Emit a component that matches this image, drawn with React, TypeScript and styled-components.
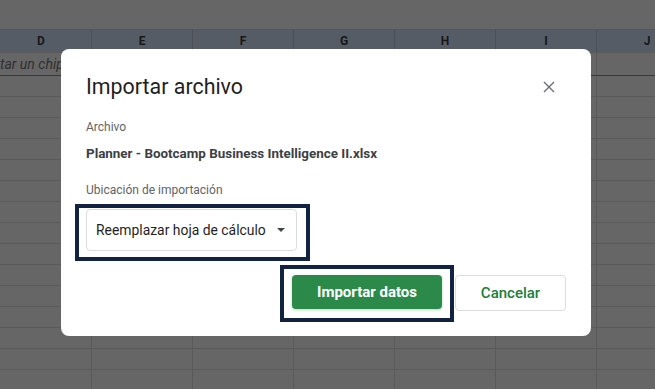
import React from 'react';
import styled, { createGlobalStyle } from 'styled-components';

const columns = ['D', 'E', 'F', 'G', 'H', 'I', 'J'];
const bodyRows = 15;

const GlobalStyle = createGlobalStyle`
  html, body {
    margin: 0;
    padding: 0;
    overflow: hidden;
    background: #666666;
  }
  * {
    box-sizing: border-box;
  }
`;

const Page = styled.div`
  position: relative;
  width: 655px;
  height: 389px;
  overflow: hidden;
  background: #666666;
  font-family: Roboto, 'Liberation Sans', Arial, sans-serif;
`;

const TopStrip = styled.div`
  height: 30px;
  background: #666666;
  border-bottom: 1px solid #575757;
`;

const GridRow = styled.div<{ $header?: boolean; $selected?: boolean; $height: number }>`
  display: grid;
  grid-template-columns: repeat(7, 101px);
  margin-left: -9px;
  height: ${({ $height }) => $height}px;
  background: ${({ $header }) => ($header ? '#565c66' : '#666666')};
  border-bottom: 1px solid ${({ $selected }) => ($selected ? '#1f3b64' : '#5a5a5a')};
`;

const Cell = styled.div<{ $header?: boolean }>`
  display: flex;
  align-items: center;
  justify-content: ${({ $header }) => ($header ? 'center' : 'flex-start')};
  border-right: 1px solid ${({ $header }) => ($header ? '#4b5058' : '#5a5a5a')};
  color: #17181a;
  font-size: 12px;
  font-weight: ${({ $header }) => ($header ? 700 : 400)};
  overflow: visible;
  white-space: nowrap;
`;

const Placeholder = styled.span`
  padding-left: 9px;
  font-size: 14px;
  font-style: italic;
  color: #303030;
`;

const Overlay = styled.div`
  position: absolute;
  inset: 0;
  display: flex;
  align-items: flex-start;
  justify-content: flex-start;
  padding: 49px 0 0 61px;
`;

const Dialog = styled.div`
  width: 530px;
  height: 287px;
  background: #ffffff;
  border-radius: 8px;
  padding: 24px 25px 25px 25px;
  display: flex;
  flex-direction: column;
`;

const TitleRow = styled.div`
  display: flex;
  align-items: center;
  justify-content: space-between;
  height: 28px;
`;

const Title = styled.h2`
  margin: 0;
  font-size: 21.4px;
  font-weight: 400;
  line-height: 28px;
  color: #1f1f1f;
`;

const CloseButton = styled.button`
  width: 24px;
  height: 24px;
  margin-right: 5px;
  padding: 0;
  border: none;
  background: transparent;
  display: flex;
  align-items: center;
  justify-content: center;
  cursor: pointer;
`;

const Label = styled.div<{ $gap: number }>`
  margin-top: ${({ $gap }) => $gap}px;
  font-size: 12px;
  line-height: 16px;
  color: #5f6368;
`;

const FileName = styled.div`
  margin-top: 9px;
  font-size: 13.4px;
  font-weight: 700;
  line-height: 20px;
  color: #3c4043;
`;

const Anchor = styled.div<{ $gap?: number }>`
  position: relative;
  align-self: flex-start;
  margin-top: ${({ $gap }) => $gap ?? 0}px;
`;

const Highlight = styled.div<{ $t: number; $r: number; $b: number; $l: number }>`
  position: absolute;
  top: ${({ $t }) => -$t}px;
  right: ${({ $r }) => -$r}px;
  bottom: ${({ $b }) => -$b}px;
  left: ${({ $l }) => -$l}px;
  border: 4px solid #112340;
  pointer-events: none;
`;

const Select = styled.div`
  width: 211px;
  height: 42px;
  border: 1px solid #dadce0;
  border-radius: 4px;
  display: flex;
  align-items: center;
  padding: 0 0 0 9px;
  gap: 11px;
  font-size: 13.9px;
  color: #1f1f1f;
`;

const Actions = styled.div`
  margin-top: 24px;
  display: flex;
  justify-content: flex-end;
  align-items: center;
  gap: 13px;
  height: 36px;
`;

const PrimaryButton = styled.button`
  width: 150px;
  height: 34px;
  border: none;
  border-radius: 4px;
  background: #2b8a4a;
  color: #ffffff;
  font-family: inherit;
  font-size: 15px;
  font-weight: 700;
  box-shadow: 0 1px 3px rgba(43, 138, 74, 0.35);
  cursor: pointer;
`;

const SecondaryButton = styled.button`
  width: 111px;
  height: 36px;
  border: 1px solid #dadce0;
  border-radius: 4px;
  background: #ffffff;
  color: #188038;
  font-family: inherit;
  font-size: 15px;
  font-weight: 500;
  cursor: pointer;
`;

const CloseIcon = () => (
  <svg width="12" height="12" viewBox="0 0 12 12">
    <path d="M1 1 L11 11 M11 1 L1 11" stroke="#6b6e72" strokeWidth="1.4" fill="none" />
  </svg>
);

const Caret = () => (
  <svg width="8" height="4" viewBox="0 0 8 4">
    <path d="M0 0 L8 0 L4 4 Z" fill="#444746" />
  </svg>
);

export default function App() {
  return (
    <Page>
      <GlobalStyle />
      <TopStrip />
      <GridRow $header $height={23}>
        {columns.map((c) => (
          <Cell key={c} $header>
            {c}
          </Cell>
        ))}
      </GridRow>
      <GridRow $selected $height={23}>
        {columns.map((c, i) => (
          <Cell key={c}>{i === 0 && <Placeholder>tar un chip</Placeholder>}</Cell>
        ))}
      </GridRow>
      {Array.from({ length: bodyRows }, (_, r) => (
        <GridRow key={r} $height={21}>
          {columns.map((c) => (
            <Cell key={c} />
          ))}
        </GridRow>
      ))}

      <Overlay>
        <Dialog>
          <TitleRow>
            <Title>Importar archivo</Title>
            <CloseButton aria-label="Cerrar">
              <CloseIcon />
            </CloseButton>
          </TitleRow>
          <Label $gap={18}>Archivo</Label>
          <FileName>Planner - Bootcamp Business Intelligence II.xlsx</FileName>
          <Label $gap={18}>Ubicación de importación</Label>
          <Anchor $gap={11}>
            <Select>
              <span>Reemplazar hoja de cálculo</span>
              <Caret />
            </Select>
            <Highlight $t={5} $r={13} $b={10} $l={11} />
          </Anchor>
          <Actions>
            <Anchor>
              <PrimaryButton>Importar datos</PrimaryButton>
              <Highlight $t={10} $r={12} $b={13} $l={12} />
            </Anchor>
            <SecondaryButton>Cancelar</SecondaryButton>
          </Actions>
        </Dialog>
      </Overlay>
    </Page>
  );
}
